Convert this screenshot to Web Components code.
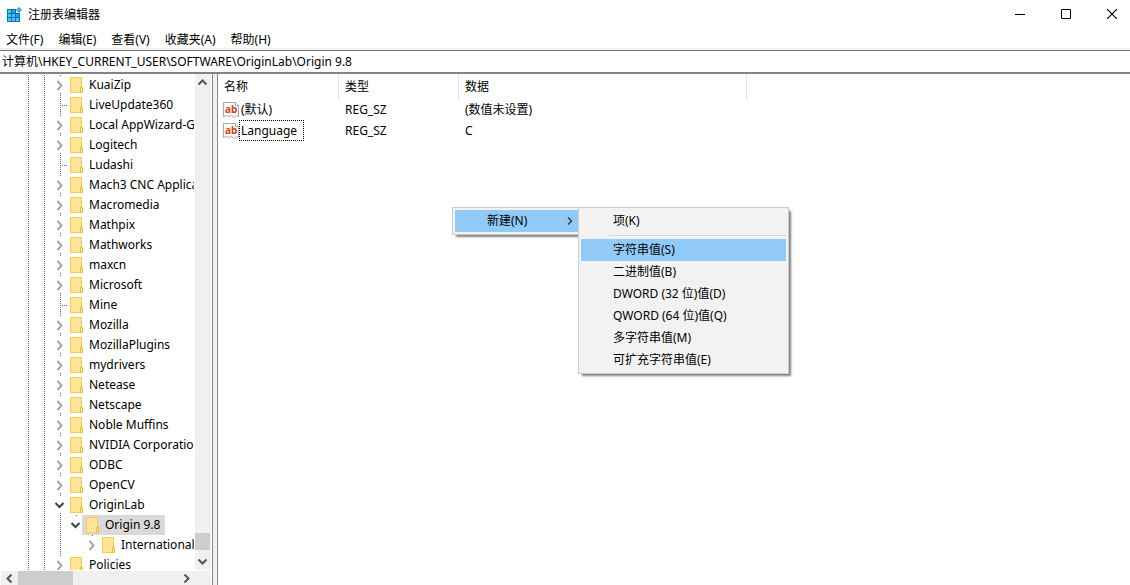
<!DOCTYPE html>
<html lang="zh-CN">
<head>
<meta charset="utf-8">
<title>注册表编辑器</title>
<style>
  html, body { margin: 0; height: 100%; }
  body {
    font: 12px/20px "Noto Sans", "Noto Sans CJK SC", sans-serif;
    color: #000;
    background: #fff;
    overflow: hidden;
  }
</style>
</head>
<body>
<reg-editor></reg-editor>

<script>
const define = (name, html, setup) => {
  const template = document.createElement('template');
  template.innerHTML = html;
  customElements.define(name, class extends HTMLElement {
    connectedCallback() {
      if (this.shadowRoot) return;
      this.attachShadow({ mode: 'open' }).append(template.content.cloneNode(true));
      if (setup) setup(this, this.shadowRoot);
    }
  });
};

const BUTTON = 'button { font: inherit; color: inherit; background: none; border: 0; padding: 0; margin: 0; }';

/* Title bar */
define('reg-titlebar', `
  <style>
    ${BUTTON}
    :host { display: flex; align-items: flex-start; height: 30px; }
    .logo { margin: 7px 6px 0; }
    h1 { flex: 1; margin: 0; font: inherit; line-height: 30px; }
    .controls { display: flex; gap: 10px; }
    button { width: 36px; height: 28px; display: grid; place-items: center; }
    svg { display: block; }
  </style>
  <svg class="logo" width="16" height="16" viewBox="0 0 16 16">
    <path d="M1 2h13v13H1z" fill="#0b73ad"/>
    <path d="M2 3h3v3H2zM2 7h3v3H2zM6 7h3v3H6zM2 11h3v3H2zM6 11h3v3H6zM10 11h3v3h-3z" fill="#4cc4f2"/>
    <path d="M6 3h3v3H6zM10 7h3v3h-3z" fill="#1d9fda"/>
    <path d="M10 0h6v6h-6z" fill="#fff"/>
    <path d="M13 0l3 3-3 3-3-3z" fill="#2b8fc8"/>
    <path d="M13 1.500l1.500 1.500-1.500 1.500-1.500-1.500z" fill="#6fd0f5"/>
  </svg>
  <h1><slot></slot></h1>
  <div class="controls">
    <button aria-label="最小化"><svg width="10" height="10"><path d="M0 5h10v1H0z"/></svg></button>
    <button aria-label="最大化"><svg width="10" height="10"><path d="M.5.5h9v9h-9z" fill="none" stroke="#000"/></svg></button>
    <button aria-label="关闭"><svg width="10" height="10"><path d="M0 0l10 10M10 0L0 10" stroke="#000" stroke-width="1.200"/></svg></button>
  </div>
`);

/* Menu bar */
define('reg-menubar', `
  <style>
    :host { display: flex; gap: 15px; padding: 0 6px; height: 18px; border-bottom: 2px solid #f0f0f0; }
  </style>
  <slot></slot>
`);
define('reg-menu', `
  <style>${BUTTON} :host { display: block; } button { line-height: 20px; display: block; }</style>
  <button><slot></slot></button>
`);

/* Address box */
define('reg-address', `
  <style>
    :host { display: block; border-top: 1px solid #7a7a7a; border-bottom: 2px solid #828288; }
    input { display: block; box-sizing: border-box; width: 100%; height: 21px; padding: 0 2px 1px; border: 0; outline: 0; font: inherit; color: inherit; background: #fff; }
  </style>
  <input type="text" aria-label="地址">
`, (el, root) => { root.querySelector('input').value = el.getAttribute('value'); });

/* One key of the tree; depth counts the guide columns left of its expander */
define('reg-key', `
  <style>
    :host { display: flex; height: 20px; padding-left: 20px; white-space: nowrap; }
    .cols { display: flex; flex: none; }
    .col { width: 16px; height: 20px; display: block; flex: none; }
    .label { display: flex; align-items: center; gap: 6px; margin-left: -2px; padding: 0 5px 0 4px; }
    :host([selected]) .label { background: #d9d9d9; }
    svg { display: block; flex: none; }
  </style>
  <span class="cols"></span>
  <span class="label">
    <svg width="13" height="16" viewBox="0 0 13 16">
      <path d="M.5.5h11v15H.5z" fill="#ffe594" stroke="#f0cb55"/>
      <path d="M10.500 10.500h2v5h-2z" fill="#ffe9a6" stroke="#e6bd3c"/>
    </svg>
    <slot></slot>
  </span>
`, (el, root) => {
  const dots = (from, to) => `<path d="M8.5 ${from}V${to}" stroke="#666" stroke-dasharray="1 1"/>`;
  const col = inner => `<svg class="col" viewBox="0 0 16 20">${inner}</svg>`;
  const depth = Number(el.getAttribute('depth') || 2);
  const guides = Math.min(depth, 3);
  let out = '';
  for (let i = 0; i < depth; i++) out += col(i < guides ? dots(0, 20) : '');
  const state = el.getAttribute('state') || 'closed';
  const last = el.hasAttribute('last');
  const glyph = {
    closed: '<path d="M5.5 6l4 4.500-4 4.500" fill="none" stroke="#a6a6a6" stroke-width="2"/>',
    open: '<path d="M3.500 8l4 4 4-4" fill="none" stroke="#404040" stroke-width="2"/>',
    leaf: '<path d="M8 10.500h8" stroke="#666" stroke-dasharray="1 1"/>'
  }[state];
  out += col((state === 'leaf' ? dots(0, 20) : dots(0, 2) + (last ? '' : dots(18, 20))) + glyph);
  root.querySelector('.cols').innerHTML = out;
});

/* Scroll bar: arrow, track with thumb, arrow */
define('reg-scrollbar', `
  <style>
    ${BUTTON}
    :host { display: flex; flex-direction: column; background: #f0f0f0; }
    :host([horizontal]) { flex-direction: row; height: 14px; }
    button { flex: none; display: grid; place-items: center; width: 15px; height: 17px; }
    :host([horizontal]) button { width: 17px; height: 100%; }
    .track { flex: 1; display: flex; flex-direction: column; width: 15px; }
    :host([horizontal]) .track { flex-direction: row; width: auto; }
    .before { flex: var(--before, 0); }
    .thumb { background: #cdcdcd; flex: var(--thumb, 1); }
    .after { flex: var(--after, 0); }
    svg { display: block; }
    :host([horizontal]) svg { transform: rotate(-90deg); }
  </style>
  <button aria-label="向前滚动"><svg width="9" height="7"><path d="M.5 5.500l4-4 4 4" fill="none" stroke="#555" stroke-width="2"/></svg></button>
  <div class="track"><div class="before"></div><div class="thumb"></div><div class="after"></div></div>
  <button aria-label="向后滚动"><svg width="9" height="7"><path d="M.5 1.500l4 4 4-4" fill="none" stroke="#555" stroke-width="2"/></svg></button>
`);

/* Left pane */
define('reg-tree', `
  <style>
    :host { display: grid; grid-template: minmax(0, 1fr) 15px / minmax(0, 1fr) 16px; box-sizing: border-box; padding-right: 1px; border-right: 1px solid #828790; }
    .keys { overflow: hidden; padding-top: 1px; margin-right: 1px; }
    .v { --before: 442; --thumb: 17; --after: 3; }
    .h { --before: 0; --thumb: 55; --after: 104; margin: 1px 0 0 1px; }
    .corner { background: #f0f0f0; margin-top: 1px; }
  </style>
  <div class="keys"><slot></slot></div>
  <reg-scrollbar class="v"></reg-scrollbar>
  <reg-scrollbar class="h" horizontal></reg-scrollbar>
  <div class="corner"></div>
`);

/* Icon of a string value */
define('reg-string-icon', `
  <style>
    :host { display: block; flex: none; width: 16px; height: 16px; }
    svg { display: block; }
    text { font: bold 10px/12px "Noto Sans", sans-serif; fill: #d04525; }
  </style>
  <svg width="16" height="16" viewBox="0 0 16 16">
    <path d="M.5.500h12l3 3v11l-2-1-2 2-3-2-3 1-2-1-3 1z" fill="#fafafa" stroke="#a8a8a8"/>
    <path d="M12.500.5v3h3" fill="#fff" stroke="#a8a8a8"/>
    <text x="2" y="11" aria-hidden="true">ab</text>
  </svg>
`);

/* Right pane: the values of the selected key */
define('reg-values', `
  <style>
    :host { display: block; box-sizing: border-box; border-left: 1px solid #828790; }
    table { border-collapse: separate; border-spacing: 0; table-layout: fixed; width: 529px; }
    col.name-col { width: 121px; }
    col.type-col { width: 120px; }
    th, td { text-align: left; font-weight: inherit; padding: 0 6px; white-space: nowrap; box-sizing: border-box; }
    th { height: 25px; border-right: 1px solid #e5e5e5; }
    td { height: 21px; }
    td:first-child { padding: 0 0 0 5px; }
    .name { display: flex; align-items: center; }
    .name span { box-sizing: border-box; height: 21px; line-height: 19px; padding: 0 6px 0 1px; border: 1px solid transparent; }
    .name .focus { border: 1px dotted #000; }
  </style>
  <table>
    <colgroup><col class="name-col"><col class="type-col"><col></colgroup>
    <thead><tr><th scope="col">名称</th><th scope="col">类型</th><th scope="col">数据</th></tr></thead>
    <tbody>
      <tr><td><div class="name"><reg-string-icon></reg-string-icon><span>(默认)</span></div></td><td>REG_SZ</td><td>(数值未设置)</td></tr>
      <tr><td><div class="name"><reg-string-icon></reg-string-icon><span class="focus">Language</span></div></td><td>REG_SZ</td><td>C</td></tr>
    </tbody>
  </table>
`);

/* Pop-up menus */
define('reg-popup', `
  <style>
    :host { display: block; box-sizing: border-box; padding: 2px; background: #f2f2f2; border: 1px solid #ccc; box-shadow: 3px 3px 2px -1px rgba(0, 0, 0, .5); }
  </style>
  <div role="menu"><slot></slot></div>
`);
define('reg-item', `
  <style>
    ${BUTTON}
    :host { display: block; }
    button { display: flex; align-items: center; justify-content: space-between; width: 100%; height: 22px; padding: 0 7px 0 32px; line-height: 22px; white-space: nowrap; }
    :host([active]) button { background: #91c9f7; }
    svg { display: none; }
    :host([parent]) svg { display: block; }
  </style>
  <button role="menuitem"><span><slot></slot></span><svg width="6" height="8"><path d="M1 .5l3.500 3.500-3.500 3.500" fill="none" stroke="#333" stroke-width="1.300"/></svg></button>
`);
define('reg-rule', `
  <style>:host { display: block; height: 1px; margin: 3px 0 3px 28px; background: #d7d7d7; }</style>
`);

/* The window */
define('reg-editor', `
  <style>
    :host { display: flex; flex-direction: column; height: 100vh; background: #fff; }
    .panes { flex: 1; min-height: 0; display: flex; gap: 4px; background: #f0f0f0; }
    reg-tree { flex: none; width: 213px; background: #fff; }
    reg-values { flex: 1; background: #fff; }
    .context { position: absolute; left: 452px; top: 207px; display: flex; align-items: flex-start; }
    .first { width: 129px; padding-right: 0; }
    .second { width: 211px; margin-left: -3px; }
  </style>
  <reg-titlebar>注册表编辑器</reg-titlebar>
  <reg-menubar>
    <reg-menu>文件(F)</reg-menu><reg-menu>编辑(E)</reg-menu><reg-menu>查看(V)</reg-menu><reg-menu>收藏夹(A)</reg-menu><reg-menu>帮助(H)</reg-menu>
  </reg-menubar>
  <reg-address value="计算机\\HKEY_CURRENT_USER\\SOFTWARE\\OriginLab\\Origin 9.8"></reg-address>
  <div class="panes">
    <reg-tree>
      <reg-key>KuaiZip</reg-key>
      <reg-key state="leaf">LiveUpdate360</reg-key>
      <reg-key>Local AppWizard-Generated</reg-key>
      <reg-key>Logitech</reg-key>
      <reg-key state="leaf">Ludashi</reg-key>
      <reg-key>Mach3 CNC Application</reg-key>
      <reg-key>Macromedia</reg-key>
      <reg-key>Mathpix</reg-key>
      <reg-key>Mathworks</reg-key>
      <reg-key>maxcn</reg-key>
      <reg-key>Microsoft</reg-key>
      <reg-key state="leaf">Mine</reg-key>
      <reg-key>Mozilla</reg-key>
      <reg-key>MozillaPlugins</reg-key>
      <reg-key>mydrivers</reg-key>
      <reg-key>Netease</reg-key>
      <reg-key>Netscape</reg-key>
      <reg-key>Noble Muffins</reg-key>
      <reg-key>NVIDIA Corporation</reg-key>
      <reg-key>ODBC</reg-key>
      <reg-key>OpenCV</reg-key>
      <reg-key state="open">OriginLab</reg-key>
      <reg-key state="open" depth="3" last selected>Origin 9.8</reg-key>
      <reg-key depth="4" last>International</reg-key>
      <reg-key>Policies</reg-key>
    </reg-tree>
    <reg-values></reg-values>
  </div>
  <div class="context">
    <reg-popup class="first"><reg-item active parent>新建(N)</reg-item></reg-popup>
    <reg-popup class="second">
      <reg-item>项(K)</reg-item>
      <reg-rule></reg-rule>
      <reg-item active>字符串值(S)</reg-item>
      <reg-item>二进制值(B)</reg-item>
      <reg-item>DWORD (32 位)值(D)</reg-item>
      <reg-item>QWORD (64 位)值(Q)</reg-item>
      <reg-item>多字符串值(M)</reg-item>
      <reg-item>可扩充字符串值(E)</reg-item>
    </reg-popup>
  </div>
`);
</script>
</body>
</html>
